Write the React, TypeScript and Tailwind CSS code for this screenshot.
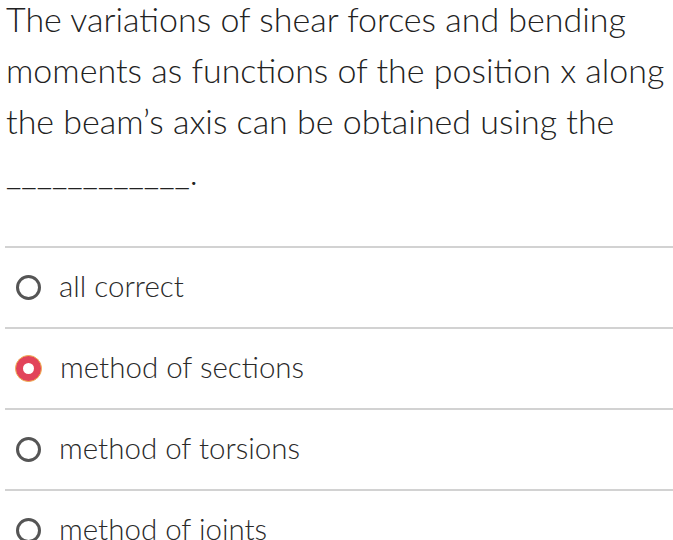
import React from 'react';

const options = [
    { label: 'all correct', selected: false },
    { label: 'method of sections', selected: true },
    { label: 'method of torsions', selected: false },
    { label: 'method of joints', selected: false },
];

function Radio({ selected }: { selected: boolean }) {
    if (selected) {
        return (
            <span className="w-[27px] h-[27px] -ml-px rounded-full bg-[#e2435a] border border-[#f0b050] flex items-center justify-center shrink-0">
                <span className="w-[11px] h-[11px] rounded-full bg-white" />
            </span>
        );
    }
    return <span className="w-[25px] h-[25px] rounded-full border-[3px] border-[#555] bg-white shrink-0" />;
}

export default function App() {
    return (
        <div className="w-[673px] h-[540px] overflow-hidden bg-white text-[#222] font-['Lato_Light','Lato',sans-serif] font-light">
            <p className="-mt-[7px] pl-[6px] pr-1 text-[34px] leading-[51px]">
                The variations of shear forces and bending moments as functions of the position x along the beam’s axis can be obtained using the ____________.
            </p>

            <div className="mt-[49px] ml-[5px]">
                {options.map((o) => (
                    <div key={o.label} className="border-t-2 border-[#d2d2d2] h-[81px] flex items-center gap-[18px] pl-[11px]">
                        <Radio selected={o.selected} />
                        <span className="text-[29.5px] text-[#2a2a2a] -mt-[2px]">{o.label}</span>
                    </div>
                ))}
            </div>
        </div>
    );
}
